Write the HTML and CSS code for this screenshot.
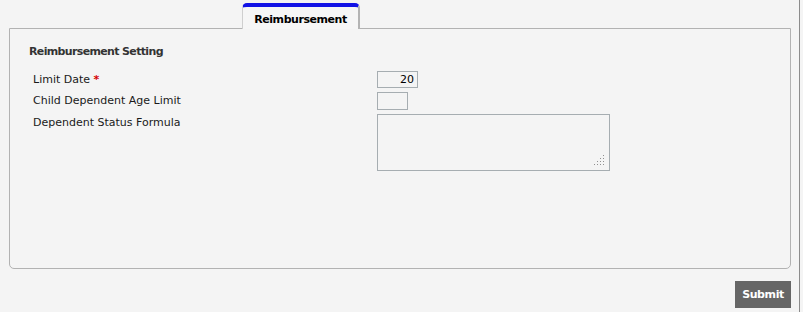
FILE: index.html
```html
<!DOCTYPE html>
<html>
<head>
<meta charset="utf-8">
<link rel="stylesheet" href="styles.css">
</head>
<body>
<div class="frame">
  <div class="content">
    <div class="tabs">
      <div class="tab">Reimbursement</div>
    </div>
    <div class="panel">
      <div class="section-title">Reimbursement Setting</div>
      <div class="form">
        <div class="label">Limit Date <span class="req">*</span></div>
        <div class="field"><input class="inp inp-date" type="text" value="20"></div>
        <div class="label">Child Dependent Age Limit</div>
        <div class="field"><input class="inp inp-age" type="text" value=""></div>
        <div class="label">Dependent Status Formula</div>
        <div class="field"><textarea class="txt"></textarea></div>
      </div>
    </div>
    <div class="actions">
      <button class="submit" type="button">Submit</button>
    </div>
  </div>
</div>
</body>
</html>
```
FILE: styles.css
```css
html, body {
  margin: 0;
  padding: 0;
  background: #f4f4f4;
  font-family: "DejaVu Sans", Verdana, sans-serif;
  font-size: 11px;
  color: #1a1a1a;
}
.frame {
  width: 800px;
  height: 312px;
  border-right: 1px solid #8c8c8c;
  box-sizing: border-box;
}
.content {
  width: 791px;
  display: flex;
  flex-direction: column;
}
.tabs {
  display: flex;
  padding-top: 3px;
  padding-left: 242px;
}
.tab {
  position: relative;
  z-index: 1;
  box-sizing: border-box;
  width: 118px;
  height: 26px;
  margin-bottom: -1px;
  padding-top: 6px;
  text-align: center;
  font-weight: bold;
  letter-spacing: -0.45px;
  line-height: 14px;
  color: #000;
  background: #f6f6f6;
  border-top: 4px solid #1212e6;
  border-left: 1px solid #cfcfcf;
  border-right: 2px solid #b4b4b4;
  border-radius: 5px 5px 0 0;
}
.panel {
  margin-left: 9px;
  box-sizing: border-box;
  height: 241px;
  border: 1px solid #b2b2b2;
  border-radius: 0 0 5px 5px;
  background: #f4f4f4;
  padding: 16px 0 0 19px;
}
.section-title {
  font-weight: bold;
  letter-spacing: -0.65px;
  color: #333;
  line-height: 14px;
}
.form {
  display: grid;
  grid-template-columns: 344px auto;
  align-items: start;
  row-gap: 4px;
  margin-top: 12px;
  margin-left: 4px;
}
.label {
  line-height: 16px;
  padding-top: 1px;
  color: #1a1a1a;
}
.req {
  color: #d40000;
  font-weight: bold;
}
.field {
  display: flex;
}
.inp {
  box-sizing: border-box;
  height: 17px;
  margin: 0;
  padding: 0 3px;
  border: 1px solid #a6adb1;
  background: #f4f4f4;
  font-family: "DejaVu Sans", Verdana, sans-serif;
  font-size: 11px;
  color: #000;
  outline: none;
}
.inp-date {
  width: 41px;
  text-align: right;
}
.inp-age {
  width: 31px;
  height: 18px;
}
.txt {
  box-sizing: border-box;
  width: 233px;
  height: 57px;
  margin: 0;
  padding: 2px;
  border: 1px solid #a6adb1;
  resize: none;
  outline: none;
  background-color: #f4f4f4;
  background-image: url("data:image/svg+xml,%3Csvg xmlns='http://www.w3.org/2000/svg' width='11' height='11'%3E%3Cg fill='%23909090'%3E%3Crect x='9' y='0' width='1' height='1'/%3E%3Crect x='6' y='3' width='1' height='1'/%3E%3Crect x='9' y='3' width='1' height='1'/%3E%3Crect x='3' y='6' width='1' height='1'/%3E%3Crect x='6' y='6' width='1' height='1'/%3E%3Crect x='9' y='6' width='1' height='1'/%3E%3Crect x='0' y='9' width='1' height='1'/%3E%3Crect x='3' y='9' width='1' height='1'/%3E%3Crect x='6' y='9' width='1' height='1'/%3E%3Crect x='9' y='9' width='1' height='1'/%3E%3C/g%3E%3C/svg%3E");
  background-repeat: no-repeat;
  background-position: right 4px bottom 4px;
  font-family: "DejaVu Sans", Verdana, sans-serif;
  font-size: 11px;
}
.actions {
  display: flex;
  justify-content: flex-end;
  margin-top: 12px;
}
.submit {
  box-sizing: border-box;
  width: 56px;
  height: 27px;
  margin: 0;
  padding: 0;
  border: none;
  background: #666666;
  color: #fff;
  font-family: "DejaVu Sans", Verdana, sans-serif;
  font-size: 11px;
  font-weight: bold;
  letter-spacing: -0.4px;
}
```
